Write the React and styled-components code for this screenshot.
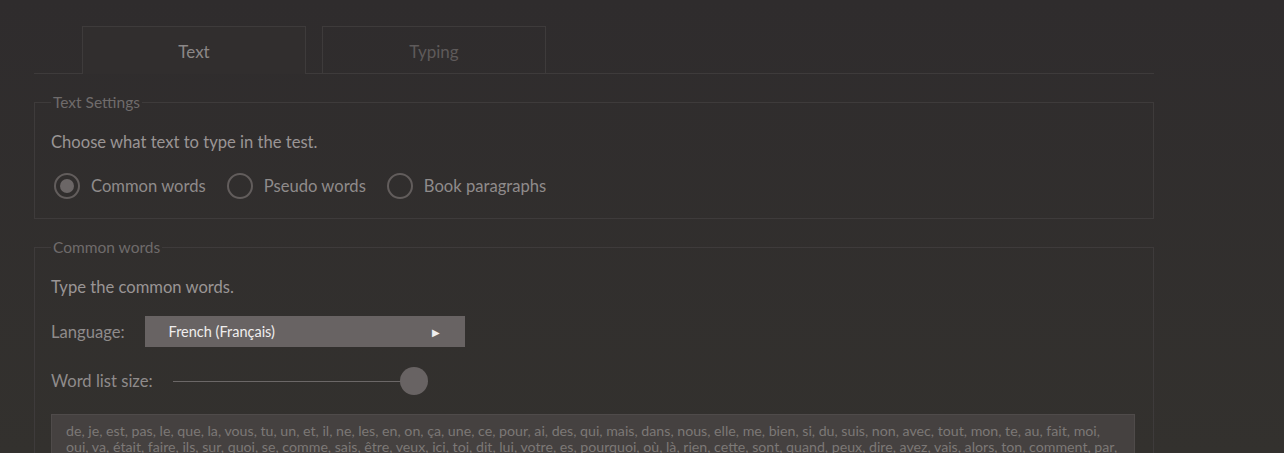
import React, { useState } from "react";
import styled, { createGlobalStyle } from "styled-components";

const GlobalStyle = createGlobalStyle`
  html, body {
    margin: 0;
    height: 100%;
    background: linear-gradient(180deg, #2f2c2d 0%, #33312e 100%);
    font-family: Lato, "Open Sans", sans-serif;
    overflow: hidden;
  }
`;

const WORDS =
  "de, je, est, pas, le, que, la, vous, tu, un, et, il, ne, les, en, on, ça, une, ce, pour, ai, des, qui, mais, dans, nous, elle, me, bien, si, du, suis, non, avec, tout, mon, te, au, fait, moi, oui, va, était, faire, ils, sur, quoi, se, comme, sais, être, veux, ici, toi, dit, lui, votre, es, pourquoi, où, là, rien, cette, sont, quand, peux, dire, avez, vais, alors, ton, comment, par, plus, avoir, sa, son, ma, mes, bon, oh, été, fais, tous, ces, peut, vraiment, leur";

const SOURCES = [
  ["common", "Common words"],
  ["pseudo", "Pseudo words"],
  ["book", "Book paragraphs"],
];

export default function App() {
  const [tab, setTab] = useState("text");
  const [source, setSource] = useState("common");

  return (
    <Page>
      <GlobalStyle />
      <TabBar>
        <Tab active={tab === "text"} onClick={() => setTab("text")}>
          Text
        </Tab>
        <Tab active={tab === "typing"} onClick={() => setTab("typing")}>
          Typing
        </Tab>
      </TabBar>

      <Fieldset>
        <Legend>Text Settings</Legend>
        <Para>Choose what text to type in the test.</Para>
        <RadioRow>
          {SOURCES.map(([id, label]) => (
            <RadioLabel key={id} onClick={() => setSource(id)}>
              <RadioCircle checked={source === id} />
              {label}
            </RadioLabel>
          ))}
        </RadioRow>
      </Fieldset>

      <Fieldset>
        <Legend>Common words</Legend>
        <Para gap={17}>Type the common words.</Para>
        <FieldRow gap={20}>
          <FieldLabel>Language:</FieldLabel>
          <Select>
            <span>French (Français)</span>
            <Arrow>▶</Arrow>
          </Select>
        </FieldRow>
        <FieldRow gap={19}>
          <FieldLabel>Word list size:</FieldLabel>
          <Slider>
            <Track />
            <Thumb />
          </Slider>
        </FieldRow>
        <WordBox>{WORDS}</WordBox>
      </Fieldset>
    </Page>
  );
}

const Page = styled.div`
  width: 1120px;
  padding: 26px 0 0 34px;
  display: flex;
  flex-direction: column;
  gap: 19px;
`;

const TabBar = styled.div`
  display: flex;
  gap: 16px;
  padding-left: 48px;
  border-bottom: 1px solid #3e3b3b;
  height: 47px;
`;

const Tab = styled.div`
  width: 222px;
  height: ${(p) => (p.active ? "47px" : "46px")};
  border: 1px solid #3e3b3b;
  border-bottom: none;
  background: ${(p) => (p.active ? "#312e2e" : "transparent")};
  color: ${(p) => (p.active ? "#8b8787" : "#5e5a5a")};
  font-size: 17px;
  padding-top: 2px;
  box-sizing: content-box;
  display: flex;
  align-items: center;
  justify-content: center;
  cursor: pointer;
  margin-bottom: -1px;
  max-height: ${(p) => (p.active ? "45px" : "44px")};
`;

const Fieldset = styled.fieldset`
  margin: 0;
  padding: 19px 16px 19px 16px;
  border: 1px solid #3e3b3b;
  min-width: 0;
`;

const Legend = styled.legend`
  color: #6f6b6b;
  font-size: 15.5px;
  padding: 0 2px;
  margin-left: 0;
`;

const Para = styled.p`
  margin: 0 0 ${(p) => p.gap ?? 19}px;
  color: #9a9595;
  font-size: 16.6px;
  line-height: 24px;
`;

const RadioRow = styled.div`
  display: flex;
  gap: 21px;
  margin-left: 3px;
`;

const RadioLabel = styled.label`
  display: flex;
  align-items: center;
  gap: 11px;
  color: #8f8b8b;
  font-size: 16.6px;
  cursor: pointer;
`;

const RadioCircle = styled.span`
  width: 22px;
  height: 22px;
  border: 2px solid #625d5c;
  border-radius: 50%;
  display: flex;
  align-items: center;
  justify-content: center;
  &::after {
    content: "";
    width: 14px;
    height: 14px;
    border-radius: 50%;
    background: #6b6666;
    display: ${(p) => (p.checked ? "block" : "none")};
  }
`;

const FieldRow = styled.div`
  display: flex;
  align-items: center;
  gap: 20px;
  margin-bottom: ${(p) => p.gap}px;
`;

const FieldLabel = styled.span`
  color: #8f8b8b;
  font-size: 16.6px;
`;

const Select = styled.div`
  width: 320px;
  height: 31px;
  background: #686363;
  color: #f0eeee;
  font-size: 14.5px;
  display: flex;
  align-items: center;
  justify-content: space-between;
  padding: 0 25px 0 24px;
  box-sizing: border-box;
`;

const Arrow = styled.span`
  font-size: 10px;
`;

const Slider = styled.div`
  position: relative;
  width: 255px;
  height: 28px;
  display: flex;
  align-items: center;
`;

const Track = styled.div`
  width: 100%;
  height: 1px;
  background: #6b6767;
`;

const Thumb = styled.div`
  position: absolute;
  right: 0;
  top: 0;
  width: 28px;
  height: 28px;
  border-radius: 50%;
  background: #686363;
`;

const WordBox = styled.div`
  background: #454140;
  border: 1px solid #4f4b4a;
  color: #7c7876;
  font-size: 14.2px;
  line-height: 16px;
  padding: 8px 14px;
  margin-right: 2px;
`;
